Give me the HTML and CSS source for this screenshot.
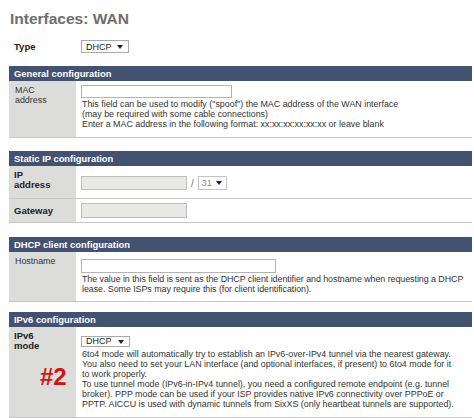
FILE: index.html
```html
<!DOCTYPE html>
<html>
<head>
<meta charset="utf-8">
<link rel="stylesheet" href="styles.css">
</head>
<body>
<div class="page">
  <h1 class="title">Interfaces: WAN</h1>

  <div class="type-row">
    <div class="type-label">Type</div>
    <div><span class="sel sel-type">DHCP<svg class="tri" viewBox="0 0 6 4" width="6" height="4"><path d="M0 0h6L3 4z"/></svg></span></div>
  </div>

  <div class="section s1">
    <div class="sec-head">General configuration</div>
    <div class="row">
      <div class="lbl">MAC<br>address</div>
      <div class="val">
        <input class="inp inp-mac" type="text">
        <div class="desc">This field can be used to modify ("spoof") the MAC address of the WAN interface<br>(may be required with some cable connections)<br>Enter a MAC address in the following format: xx:xx:xx:xx:xx:xx or leave blank</div>
      </div>
    </div>
  </div>

  <div class="section s2">
    <div class="sec-head">Static IP configuration</div>
    <div class="row">
      <div class="lbl bold">IP<br>address</div>
      <div class="val">
        <div class="ip-line">
          <input class="inp inp-ip" type="text" disabled>
          <span class="slash">/</span>
          <span class="sel sel-mask">31<svg class="tri" viewBox="0 0 6 4" width="6" height="4"><path d="M0 0h6L3 4z"/></svg></span>
        </div>
      </div>
    </div>
    <div class="row">
      <div class="lbl bold lbl-gw">Gateway</div>
      <div class="val val-gw">
        <input class="inp inp-gw" type="text" disabled>
      </div>
    </div>
  </div>

  <div class="section s3">
    <div class="sec-head">DHCP client configuration</div>
    <div class="row">
      <div class="lbl">Hostname</div>
      <div class="val val-host">
        <input class="inp inp-host" type="text">
        <div class="desc desc-host">The value in this field is sent as the DHCP client identifier and hostname when requesting a DHCP<br>lease. Some ISPs may require this (for client identification).</div>
      </div>
    </div>
  </div>

  <div class="section s4">
    <div class="sec-head">IPv6 configuration</div>
    <div class="row">
      <div class="lbl bold lbl-v6">IPv6<br>mode
        <div class="note">#2</div>
      </div>
      <div class="val">
        <span class="sel sel-v6">DHCP<svg class="tri" viewBox="0 0 6 4" width="6" height="4"><path d="M0 0h6L3 4z"/></svg></span>
        <div class="desc">6to4 mode will automatically try to establish an IPv6-over-IPv4 tunnel via the nearest gateway.<br>You also need to set your LAN interface (and optional interfaces, if present) to 6to4 mode for it<br>to work properly.<br>To use tunnel mode (IPv6-in-IPv4 tunnel), you need a configured remote endpoint (e.g. tunnel<br>broker). PPP mode can be used if your ISP provides native IPv6 connectivity over PPPoE or<br>PPTP. AICCU is used with dynamic tunnels from SixXS (only heartbeat tunnels are supported).</div>
      </div>
    </div>
  </div>
</div>
</body>
</html>
```

FILE: styles.css
```css
html, body {
  margin: 0;
  padding: 0;
  background: #fdfefd;
}

body {
  font-family: "Liberation Sans", Arial, sans-serif;
  font-size: 8.9px;
  color: #333;
  width: 474px;
  height: 418px;
  overflow: hidden;
}

.page {
  padding: 0 2px 0 9px;
}

.title {
  margin: 10px 0 0 1px;
  font-size: 15.5px;
  line-height: 18px;
  font-weight: bold;
  color: #6e6e6e;
}

.type-row {
  margin-top: 12px;
  display: grid;
  grid-template-columns: 72px auto;
  align-items: center;
  height: 13px;
}

.type-label {
  padding-left: 5px;
  font-weight: bold;
  font-size: 9.5px;
  color: #222;
}

.sel {
  display: inline-flex;
  align-items: center;
  justify-content: space-between;
  box-sizing: border-box;
  border: 1px solid #a9a9a9;
  background: #fff;
  color: #222;
  padding: 0 5px 0 4px;
  font-size: 9px;
  vertical-align: top;
}

.tri {
  display: block;
  fill: #222;
}

.sel-type {
  width: 48px;
  height: 13px;
}

.sel-mask {
  width: 29px;
  height: 14px;
  color: #8a8a8a;
  border-color: #c4c4c4;
  padding: 0 4px 0 3px;
}

.sel-v6 {
  width: 49px;
  height: 11px;
  line-height: 9px;
}

.s1 { margin-top: 13px; }
.s2 { margin-top: 13px; }
.s3 { margin-top: 14px; }
.s4 { margin-top: 10px; }

.sec-head {
  height: 15px;
  line-height: 15px;
  background: #445271;
  color: #fff;
  font-weight: bold;
  font-size: 9.4px;
  padding-left: 5px;
}

.row {
  display: grid;
  grid-template-columns: 67px 1fr;
  border-bottom: 1px solid #c6c6c6;
}

.lbl {
  background: #dcdcda;
  padding: 4px 5px 5px 6px;
  line-height: 10px;
  color: #333;
}

.lbl.bold {
  font-weight: bold;
  font-size: 9.5px;
  padding-left: 5px;
  color: #222;
}

.lbl-gw {
  padding-top: 7px;
}

.lbl-v6 {
  position: relative;
}

.val {
  padding: 4px 2px 8px 5px;
  background: #fff;
  min-width: 0;
}

.val-gw {
  padding: 4px 2px 4px 5px;
}

.val-host {
  padding-bottom: 7px;
}

.desc {
  line-height: 10px;
  white-space: nowrap;
  margin-left: 1px;
}

.desc-host {
  letter-spacing: -0.05px;
}

.inp {
  display: block;
  box-sizing: border-box;
  border: 1px solid #b3b3b3;
  background: #fff;
  margin: 0;
  padding: 0;
  font: inherit;
}

.inp-mac {
  width: 151px;
  height: 13px;
  margin-bottom: 1px;
}

.inp-ip {
  width: 106px;
  height: 14px;
  background: #e8e8e5;
  border-color: #bdbdbb;
}

.ip-line {
  display: flex;
  align-items: center;
  margin-top: 6px;
}

.slash {
  color: #777;
  font-size: 10px;
  margin: 0 4px 0 4px;
}

.inp-gw {
  width: 106px;
  height: 15px;
  background: #e8e8e5;
  border-color: #bdbdbb;
}

.inp-host {
  width: 195px;
  height: 14px;
  margin-top: 3px;
  margin-bottom: 1px;
}

.sel-v6 {
  margin-top: 5px;
  margin-bottom: 2px;
}

.note {
  position: absolute;
  left: 31px;
  top: 38px;
  font-size: 24px;
  line-height: 24px;
  color: #d01414;
  font-weight: bold;
}
```
